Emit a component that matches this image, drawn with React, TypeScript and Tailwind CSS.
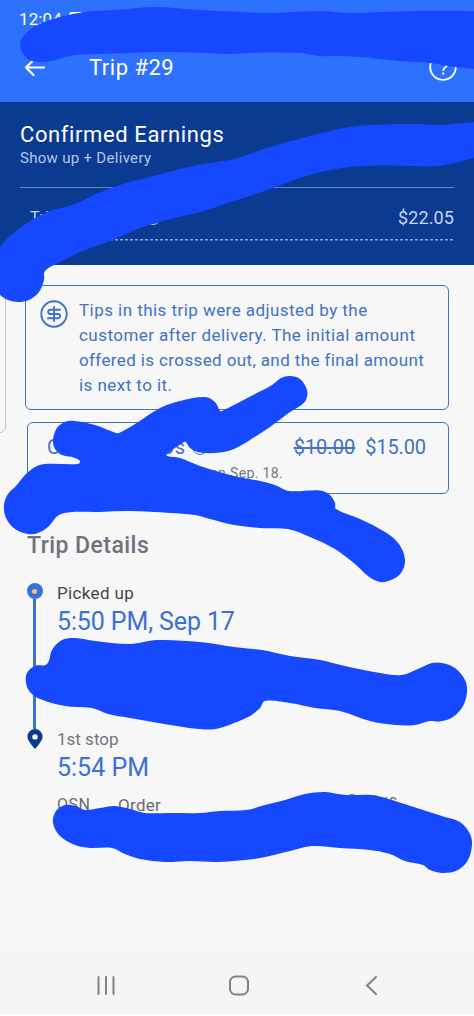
import React from "react";

type Point = [number, number];

const strokes: Point[][] = [
  [[20, 45], [25, 34], [40, 24], [60, 17], [85, 12], [115, 10], [155, 7], [200, 10], [234, 11.5], [265, 13], [320, 11], [350, 13], [410, 11], [474, 11], [490, 12], [490, 69], [474, 69], [455, 67], [430, 63], [400, 61], [360, 57], [320, 56], [300, 53], [265, 52.5], [230, 54], [200, 53], [165, 52], [130, 53], [100, 54], [75, 55], [55, 60], [42, 62], [28, 59]],
  [[-10, 258], [0, 246], [20, 228], [45, 213], [75, 204], [100, 192], [130, 182], [150, 177], [180, 169], [210, 163], [234, 159], [270, 147], [310, 136], [350, 127], [385, 124.5], [420, 124], [440, 125], [474, 122], [490, 122], [490, 157], [474, 158], [462, 161], [440, 166], [415, 166], [380, 165.5], [350, 167], [325, 171], [300, 178], [270, 189], [234, 201], [200, 212], [170, 219], [140, 228], [110, 241], [80, 252], [60, 262], [45, 271], [44, 280], [39, 292], [29, 300], [18, 302], [8, 300], [0, 295], [-10, 285]],
  [[53, 440], [57, 428], [65, 422], [75, 421], [95, 425], [116, 433], [119, 433], [135, 424], [160, 408], [180, 401], [205, 397], [215, 402], [220, 411], [222, 411], [234, 405], [255, 394], [272, 385], [281, 378], [290, 376], [300, 379], [307, 390], [306, 400], [300, 406], [290, 412], [270, 427], [250, 440], [234, 449], [220, 452.5], [200, 452.5], [190, 448], [186, 442], [184, 442], [167, 454], [167, 456], [180, 458], [200, 466], [234, 476], [260, 481], [275, 485], [289, 491], [320, 490.5], [330, 495], [335, 503], [336, 509], [360, 519], [385, 532], [399, 544], [405, 560], [401, 573], [391, 580], [380, 582], [368, 576], [355, 564], [335, 549], [310, 537], [288, 529], [260, 528], [234, 525], [210, 519], [195, 515], [170, 513], [130, 511], [100, 512], [61, 514], [48, 527], [38, 533], [28, 534], [15, 529], [6, 518], [4, 505], [8, 494], [16, 486], [25, 475], [35, 467], [45, 464], [78, 464], [80, 461], [72, 457], [62, 455], [55, 449]],
  [[47, 664], [52, 650], [62, 640], [75, 638], [95, 641], [130, 644], [157, 640], [200, 642], [234, 647], [262, 650], [290, 656], [320, 660], [345, 666], [380, 673], [402, 675], [420, 668], [432, 663], [442, 663], [455, 668], [465, 680], [467, 692], [463, 706], [453, 717], [440, 721.5], [430, 721], [415, 725], [395, 725], [370, 721], [340, 711], [315, 708], [290, 703], [265, 701], [260, 708], [250, 716], [234, 723], [220, 728], [205, 729.5], [170, 725], [130, 718], [108, 714], [92, 708], [65, 706], [40, 699], [30, 692], [26, 683], [27, 673], [35, 666]],
  [[53, 823], [56, 811], [65, 805], [76, 806], [85, 810], [100, 808], [115, 806], [130, 809], [145, 813], [170, 813], [200, 813], [220, 811], [246, 810], [265, 805], [285, 800], [305, 794], [325, 792], [345, 795], [372, 795], [395, 801], [420, 809], [445, 817], [460, 822], [470, 834], [472, 845], [468, 860], [458, 870], [443, 873], [430, 870], [423, 865], [405, 861], [390, 854], [370, 850], [340, 848], [312, 846], [290, 851], [260, 858], [234, 861], [215, 862], [190, 861], [165, 862], [140, 859], [125, 854], [112, 848], [90, 848], [75, 845], [60, 836]],
];

// closed smooth curve through every point
function smooth(pts: Point[]) {
  const n = pts.length;
  let d = `M${pts[0][0]} ${pts[0][1]}`;
  for (let i = 0; i < n; i++) {
    const a = pts[(i - 1 + n) % n];
    const b = pts[i];
    const c = pts[(i + 1) % n];
    const e = pts[(i + 2) % n];
    const k = Math.hypot(c[0] - b[0], c[1] - b[1]) / 3;
    const l1 = Math.hypot(c[0] - a[0], c[1] - a[1]) || 1;
    const l2 = Math.hypot(e[0] - b[0], e[1] - b[1]) || 1;
    d += `C${b[0] + ((c[0] - a[0]) / l1) * k} ${b[1] + ((c[1] - a[1]) / l1) * k} ${c[0] - ((e[0] - b[0]) / l2) * k} ${c[1] - ((e[1] - b[1]) / l2) * k} ${c[0]} ${c[1]}`;
  }
  return d + "Z";
}

function Scribbles() {
  return (
    <svg className="absolute inset-0 pointer-events-none" width="474" height="1016" viewBox="0 0 474 1016" fill="#1548ff">
      {strokes.map((pts, i) => (
        <path key={i} d={smooth(pts)} />
      ))}
    </svg>
  );
}

function Header() {
  return (
    <header className="h-[102px] bg-[#2f71ff] text-white">
      <div className="flex h-10 items-center gap-[7px] pl-[19px] text-[17px] tracking-[0.1px]">
        <span>12:04</span>
        <span className="mb-0.5 h-3.5 w-3.5 rounded-[3px] bg-white" />
      </div>
      <div className="flex h-[54px] items-center pl-6 pr-[17px]">
        <svg width="22" height="20" viewBox="0 0 22 20" fill="none" stroke="currentColor" strokeWidth="2.2" strokeLinecap="round" strokeLinejoin="round">
          <path d="M20 10.500H2M9.500 3L2 10.500l7.500 7.500" />
        </svg>
        <h1 className="ml-[43px] text-[22px] tracking-[0.5px]">Trip #29</h1>
        <svg className="ml-auto" width="28" height="28" viewBox="0 0 28 28" fill="none" stroke="currentColor" strokeWidth="1.8">
          <circle cx="14" cy="14" r="12.8" />
          <path d="M10.500 10.500a4 3.800 0 1 1 6 3.500c-1.600.9-2.200 1.500-2.200 3.800" />
          <path d="M14.300 19.500v2" />
        </svg>
      </div>
    </header>
  );
}

function Earnings() {
  return (
    <section className="h-[163px] bg-[#0b3b91] px-5 pt-5 text-white">
      <div className="flex h-[26px] items-start justify-between">
        <h2 className="text-[22px] leading-[26px] tracking-[0.6px]">Confirmed Earnings</h2>
        <span className="mt-0.5 text-[24px] leading-[26px]">$37.05</span>
      </div>
      <p className="text-[15px] leading-5 tracking-[0.3px] text-[#b3c7ec]">Show up + Delivery</p>
      <div className="mt-[19px] border-t border-[#6684c0]" />
      <div className="flex h-[51px] items-center justify-between pl-2.5 pt-2 text-base text-[#c3d4f5]">
        <div className="flex items-center">
          <span className="w-[116px] tracking-[0.4px]">Trip earnings</span>
          <span className="h-3.5 w-3.5 rounded-full border border-current" />
        </div>
        <span className="text-[18px] tracking-[0.1px]">$22.05</span>
      </div>
      <svg className="block" width="434" height="2" stroke="#8ba5d8" strokeWidth="1.5">
        <path d="M0 .8H434" strokeDasharray="3 2" />
      </svg>
    </section>
  );
}

function TipNotice() {
  return (
    <div className="ml-[25px] mr-[25px] flex h-[125px] gap-[11px] rounded-md border-[1.5px] border-[#4272c4] pl-3.5 pt-3 text-[#4272c4]">
      <svg className="mt-0.5 shrink-0" width="28" height="28" viewBox="0 0 28 28" fill="none" stroke="currentColor" strokeWidth="1.9" strokeLinecap="round">
        <circle cx="14" cy="14" r="12.7" />
        <path d="M20 9.800H10.300a2.100 2.100 0 0 0 0 4.200H18a2.100 2.100 0 0 1 0 4.200H8M14 7v14" />
      </svg>
      <p className="text-[17px] leading-[25px] tracking-[0.45px] whitespace-nowrap">
        Tips in this trip were adjusted by the
        <br />
        customer after delivery. The initial amount
        <br />
        <span className="tracking-[0.38px]">offered is crossed out, and the final amount</span>
        <br />
        is next to it.
      </p>
    </div>
  );
}

function TipAmount() {
  return (
    <div className="ml-[27px] mr-[25px] mt-3 h-[72px] rounded-md border-[1.5px] border-[#4272c4] pl-[19px] pr-[22px] pt-2.5">
      <div className="flex h-7 items-center text-[20px] text-[#4272c4]">
        <span className="w-[145px] tracking-[1.1px] whitespace-nowrap">Customer tips</span>
        <span className="h-4 w-4 rounded-full border border-current" />
        <s className="ml-auto decoration-[1.5px]">$10.00</s>
        <span className="ml-[10px] tracking-[-0.1px]">$15.00</span>
      </div>
      <p className="mt-0.5 pr-[143px] text-right text-[14px] leading-5 tracking-[0.35px] text-[#73767d]">Final as seen on Sep. 18.</p>
    </div>
  );
}

function Timeline() {
  return (
    <div className="mt-6 flex pl-[26px]">
      <div className="flex w-[17px] flex-col items-center">
        <span className="flex h-4 w-4 items-center justify-center rounded-full bg-[#3871e0]">
          <span className="h-[5px] w-[5px] rounded-full bg-[#f5c36b]" />
        </span>
        <span className="h-[130px] w-[2.5px] bg-[#3c72d9]" />
        <svg className="block shrink-0" width="16" height="20" viewBox="0 0 16 20">
          <path fill="#0b3b91" fillRule="evenodd" d="M8 0a7.600 7.600 0 0 1 7.600 7.600C15.600 12.500 8 20 8 20S.4 12.500.4 7.600A7.600 7.600 0 0 1 8 0Zm0 5.200a2.700 2.700 0 1 0 0 5.400 2.700 2.700 0 0 0 0-5.400Z" />
        </svg>
      </div>
      <div className="ml-3.5">
        <p className="text-[17px] leading-5 tracking-[0.35px] text-[#43464f]">Picked up</p>
        <p className="mt-1 text-[25px] leading-[30px] tracking-[-0.12px] text-[#3b70d8]">5:50 PM, Sep 17</p>
        <p className="mt-[92px] text-[17px] leading-5 text-[#73767d]">1st stop</p>
        <p className="mt-1 text-[25px] leading-[30px] text-[#3b70d8]">5:54 PM</p>
        <div className="mt-2 flex items-start text-base leading-5 text-[#676a73]">
          <span className="mt-1 w-[61px] tracking-[0.5px]">OSN</span>
          <span className="mt-1 w-[229px] text-[17px] tracking-[0.3px]">Order</span>
          <span className="tracking-[0.9px]">Status</span>
        </div>
      </div>
    </div>
  );
}

function NavBar() {
  return (
    <nav className="mt-auto h-[64px] border-b-2 border-white bg-[#f5f5f5] px-[95px] text-[#828282]">
      <div className="flex h-[66px] items-center">
        <svg width="22" height="22" viewBox="0 0 22 22" fill="none" stroke="currentColor" strokeWidth="2" strokeLinecap="round">
          <path d="M3.500 3v17M11 3v17M18.500 3v17" />
        </svg>
        <svg className="ml-[111px]" width="22" height="22" viewBox="0 0 22 22" fill="none" stroke="currentColor" strokeWidth="2">
          <rect x="2" y="2.5" width="18" height="18" rx="5.5" />
        </svg>
        <svg className="ml-auto" width="14" height="22" viewBox="0 0 14 22" fill="none" stroke="currentColor" strokeWidth="2" strokeLinecap="round">
          <path d="M11 3L2 11.500l9 8.500" />
        </svg>
      </div>
    </nav>
  );
}

export default function App() {
  return (
    <div className="relative flex h-[1016px] w-[474px] flex-col overflow-hidden bg-[#f7f7f7] font-['Roboto',sans-serif]">
      <Header />
      <Earnings />
      <main className="pt-5">
        <TipNotice />
        <TipAmount />
        <h2 className="mt-[39px] pl-[27px] text-[23px] font-medium leading-[26px] tracking-[0.45px] text-[#6e727c]">Trip Details</h2>
        <Timeline />
      </main>
      <NavBar />
      {/* edge panel handle */}
      <div className="absolute left-[-10px] top-[290px] h-[143px] w-4 rounded-md border border-[#c4c4c4]" />
      <Scribbles />
    </div>
  );
}
